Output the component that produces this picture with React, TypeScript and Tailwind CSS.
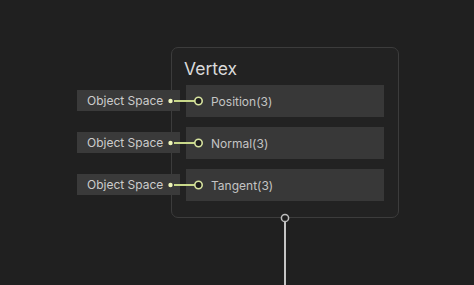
const ports = ["Position(3)", "Normal(3)", "Tangent(3)"];

function Wires() {
  return (
    <svg className="pointer-events-none absolute inset-0" width={474} height={285} viewBox="0 0 474 285">
      {[101, 143, 185].map((y) => (
        <g key={y}>
          <line x1={174} y1={y} x2={195} y2={y} stroke="#c9d98a" strokeWidth={2} />
          <circle cx={170.5} cy={y} r={2.2} fill="#eef5b8" />
          <circle cx={198.5} cy={y} r={3.7} fill="#1e1e1e" stroke="#d8e4a0" strokeWidth={1.6} />
        </g>
      ))}
      <line x1={285} y1={222} x2={285} y2={285} stroke="#c4c4c4" strokeWidth={2} />
      <circle cx={285} cy={218} r={3.6} fill="#1e1e1e" stroke="#bdbdbd" strokeWidth={1.5} />
    </svg>
  );
}

export default function App() {
  return (
    <div
      className="relative h-[285px] w-[474px] overflow-hidden bg-[#202020]"
      style={{ fontFamily: "Inter, 'Noto Sans', sans-serif" }}
    >
      <div className="absolute left-[171px] top-[47px] h-[171px] w-[228px] rounded-[7px] border border-[#3c3c3c] bg-[#222222]">
        <div className="pl-[12px] pt-[7px] text-[17.5px] leading-[27px] text-[#dadada]">Vertex</div>
        <div className="mt-[3px] flex flex-col gap-[10px] pl-[14px]">
          {ports.map((p) => (
            <div key={p} className="flex h-[32px] w-[198px] items-center bg-[#383838] pl-[25px] pt-[1px] text-[12px] text-[#c4c4c4]">
              {p}
            </div>
          ))}
        </div>
      </div>

      <div className="absolute left-[77px] top-[90px] flex flex-col gap-[21px]">
        {ports.map((p) => (
          <div key={p} className="flex h-[21px] w-[103px] items-center bg-[#3a3a3a] pl-[10px] text-[12px] text-[#cccccc]">
            Object Space
          </div>
        ))}
      </div>

      <Wires />
    </div>
  );
}
